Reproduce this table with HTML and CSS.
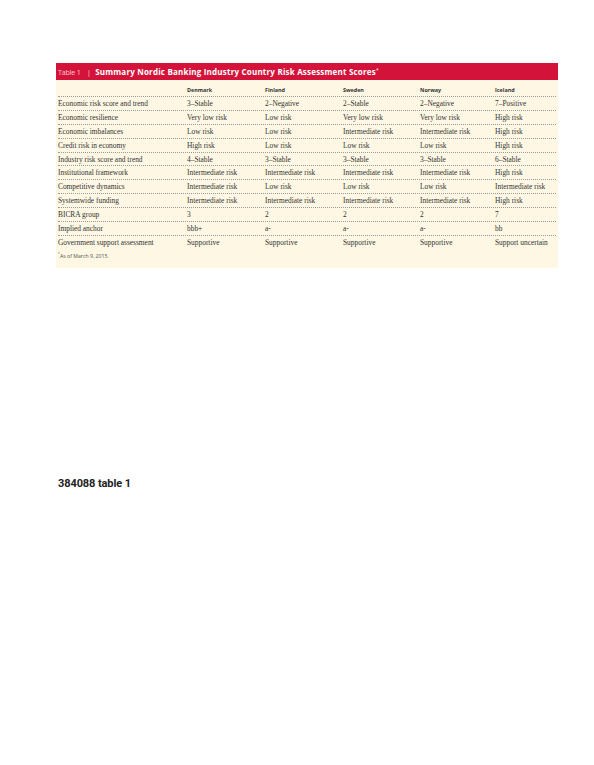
FILE: index.html
```html
<!DOCTYPE html>
<html>
<head>
<meta charset="utf-8">
<link rel="stylesheet" href="styles.css">
</head>
<body>
<div class="page">
  <div class="tablebox">
    <div class="titlebar"><span class="tnum">Table 1</span><span class="sep">|</span><span class="ttl">Summary Nordic Banking Industry Country Risk Assessment Scores<sup>*</sup></span></div>
    <div class="body">
      <div class="row head">
        <div class="c0"></div><div class="c">Denmark</div><div class="c">Finland</div><div class="c">Sweden</div><div class="c">Norway</div><div class="c">Iceland</div>
      </div>
      <div class="row"><div class="c0">Economic risk score and trend</div><div class="c">3–Stable</div><div class="c">2–Negative</div><div class="c">2–Stable</div><div class="c">2–Negative</div><div class="c">7–Positive</div></div>
      <div class="row"><div class="c0">Economic resilience</div><div class="c">Very low risk</div><div class="c">Low risk</div><div class="c">Very low risk</div><div class="c">Very low risk</div><div class="c">High risk</div></div>
      <div class="row"><div class="c0">Economic imbalances</div><div class="c">Low risk</div><div class="c">Low risk</div><div class="c">Intermediate risk</div><div class="c">Intermediate risk</div><div class="c">High risk</div></div>
      <div class="row"><div class="c0">Credit risk in economy</div><div class="c">High risk</div><div class="c">Low risk</div><div class="c">Low risk</div><div class="c">Low risk</div><div class="c">High risk</div></div>
      <div class="row"><div class="c0">Industry risk score and trend</div><div class="c">4–Stable</div><div class="c">3–Stable</div><div class="c">3–Stable</div><div class="c">3–Stable</div><div class="c">6–Stable</div></div>
      <div class="row"><div class="c0">Institutional framework</div><div class="c">Intermediate risk</div><div class="c">Intermediate risk</div><div class="c">Intermediate risk</div><div class="c">Intermediate risk</div><div class="c">High risk</div></div>
      <div class="row"><div class="c0">Competitive dynamics</div><div class="c">Intermediate risk</div><div class="c">Low risk</div><div class="c">Low risk</div><div class="c">Low risk</div><div class="c">Intermediate risk</div></div>
      <div class="row"><div class="c0">Systemwide funding</div><div class="c">Intermediate risk</div><div class="c">Intermediate risk</div><div class="c">Intermediate risk</div><div class="c">Intermediate risk</div><div class="c">High risk</div></div>
      <div class="row"><div class="c0">BICRA group</div><div class="c">3</div><div class="c">2</div><div class="c">2</div><div class="c">2</div><div class="c">7</div></div>
      <div class="row"><div class="c0">Implied anchor</div><div class="c">bbb+</div><div class="c">a-</div><div class="c">a-</div><div class="c">a-</div><div class="c">bb</div></div>
      <div class="row last"><div class="c0">Government support assessment</div><div class="c">Supportive</div><div class="c">Supportive</div><div class="c">Supportive</div><div class="c">Supportive</div><div class="c">Support uncertain</div></div>
      <div class="note"><sup>*</sup>As of March 9, 2015.</div>
    </div>
  </div>
  <div class="caption">384088 table 1</div>
</div>
</body>
</html>
```
FILE: styles.css
```css
html, body { margin: 0; padding: 0; background: #fff; }
.page { padding: 63px 36px 0 56px; }
.tablebox { width: 502px; }
.titlebar {
  background: #d3133a;
  color: #fff;
  height: 17px;
  display: flex;
  align-items: center;
  padding-left: 2px;
  font-family: "Open Sans", "Liberation Sans", sans-serif;
  font-size: 8px;
  white-space: nowrap;
}
.titlebar .tnum { font-weight: 400; color: #f6c9d2; font-size: 7.2px; letter-spacing: -0.2px; }
.titlebar .sep { margin: 0 4px 0 6px; font-weight: 400; color: #f6c9d2; }
.titlebar .ttl { font-weight: 700; letter-spacing: 0.2px; }
.titlebar sup { font-size: 5px; vertical-align: 3px; font-weight: 400; }
.body {
  background: #fdf7e3;
  padding: 4px 2px 8px 2px;
  font-family: "Liberation Serif", "DejaVu Serif", serif;
  font-size: 7.4px;
  color: #333;
}
.row {
  display: grid;
  grid-template-columns: 129px 78px 78px 77px 75px 1fr;
  height: 13.9px;
  align-items: center;
  border-bottom: 1px dotted #9a9a9a;
  box-sizing: border-box;
}
.row.head {
  font-family: "Open Sans", "Liberation Sans", sans-serif;
  font-weight: 700;
  font-size: 5.4px;
  color: #333;
  height: 13px;
}
.row.last { border-bottom: none; }
.c0, .c { white-space: nowrap; }
.note {
  font-family: "Open Sans", "Liberation Sans", sans-serif;
  font-size: 5.2px;
  color: #555;
  margin-top: 1px;
}
.note sup { font-size: 3.5px; }
.caption {
  margin-top: 209px;
  font-family: "Roboto", "Liberation Sans", sans-serif;
  font-weight: 700;
  font-size: 11px;
  color: #222;
  letter-spacing: -0.1px;
  padding-left: 2px;
}
```
